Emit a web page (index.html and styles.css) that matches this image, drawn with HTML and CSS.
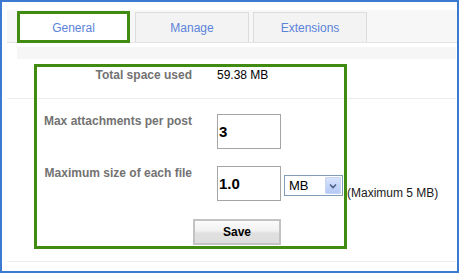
FILE: index.html
```html
<!DOCTYPE html>
<html>
<head>
	<title>Attachment settings</title>
	<link rel="stylesheet" href="styles.css">
</head>
<body>
	<div class="frame">
		<ul class="tabs">
			<li class="active"><a href="#">General</a></li>
			<li><a href="#">Manage</a></li>
			<li><a href="#">Extensions</a></li>
		</ul>
		<div class="band"></div>

		<div class="row row-first">
			<div class="label">Total space used</div>
			<div class="value">59.38 MB</div>
		</div>

		<div class="row row-count">
			<div class="label">Max attachments per post</div>
			<div class="value"><input class="num" type="text" value="3"></div>
		</div>

		<div class="row row-size">
			<div class="label">Maximum size of each file</div>
			<div class="value">
				<input class="num" type="text" value="1.0">
				<div class="select">
					<span>MB</span>
					<span class="arrow">
						<svg width="8" height="6" viewBox="0 0 8 6"><path d="M1 1.5 L4 4.5 L7 1.5" fill="none" stroke="#4c5f86" stroke-width="1.6"/></svg>
					</span>
				</div>
				<span class="note">(Maximum 5 MB)</span>
			</div>
		</div>

		<div class="row row-save">
			<button class="save">Save</button>
		</div>

		<!-- green marker drawn over the form -->
		<div class="highlight"></div>
	</div>
</body>
</html>
```

FILE: styles.css
```css
* {margin: 0; padding: 0; box-sizing: border-box;}
body {font-family: "Liberation Sans", Arial, sans-serif; font-size: 12px; background: #fff;}

.frame {position: relative; width: 459px; height: 273px; border: 2px solid #3c79d1; padding: 8px 0 0 5px; overflow: hidden; background: #fff;}

/* tabs */
.tabs {display: flex; height: 33px; background: #f7f7f7; border-bottom: 1px solid #e4e4e4; padding-left: 10px; list-style: none;}
.tabs li {width: 114px; height: 30px; margin-top: 2px; margin-right: 4px; border: 1px solid #dcdcdc; border-bottom: none; background: #f3f3f3; text-align: center; line-height: 30px;}
.tabs li a {color: #5b83da; text-decoration: none;}
.tabs li.active {width: 113px; height: 32px; margin-top: 1px; margin-right: 5px; border: 3px solid #408b10; background: #fff; line-height: 29px;}

.band {height: 12px; margin: 4px 1px 0 10px; background: #f6f6f6;}

/* form rows */
.row {display: flex; align-items: flex-start; margin-right: 1px; line-height: 14px;}
.label {width: 185px; flex-shrink: 0; text-align: right; font-weight: bold; color: #727272;}
.value {margin-left: 25px; display: flex; align-items: flex-start; color: #000;}

.row-first {height: 40px; padding-top: 9px; border-bottom: 1px solid #ececec;}
.row-count {padding-top: 15px; padding-bottom: 17px;}
.row-save {padding: 18px 0 16px 186px; border-bottom: 1px solid #ececec;}

.num {width: 64px; height: 35px; border: 1px solid #a5a5a5; padding-left: 1px; font-family: "Liberation Sans", Arial, sans-serif; font-size: 15px; font-weight: bold; color: #000; outline: none;}

.select {display: flex; align-items: center; width: 59px; height: 21px; margin: 9px 0 0 3px; border: 1px solid #7f9db9; background: #fff; font-size: 13px;}
.select span {padding-left: 4px;}
.select .arrow {display: flex; align-items: center; justify-content: center; margin-left: auto; width: 16px; height: 17px; margin-right: 1px; padding: 0; border: 1px solid #c6d5f6; border-radius: 1px; background: linear-gradient(#d8e4fc, #b5c9f5);}

.note {margin: 20px 0 0 4px; color: #1a1a1a;}

.save {width: 88px; height: 26px; border: 2px solid #c3c3c3; background: linear-gradient(#fbfbfb 0%, #f1f1f1 45%, #e0e0e0 55%, #dedede 100%); font-family: "Liberation Sans", Arial, sans-serif; font-size: 12px; font-weight: bold; color: #000;}

.highlight {position: absolute; left: 32px; top: 62px; width: 313px; height: 185px; border: 3px solid #408b10; pointer-events: none;}
```
